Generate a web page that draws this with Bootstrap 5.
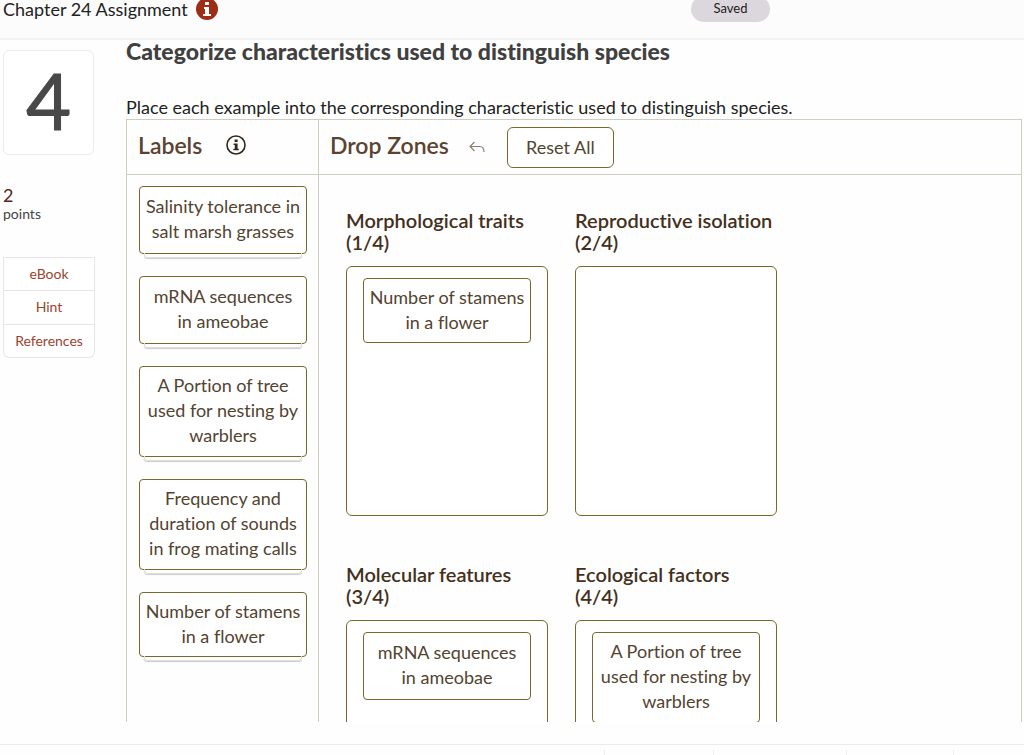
<!DOCTYPE html>
<html lang="en">
<head>
<meta charset="utf-8">
<meta name="viewport" content="width=device-width, initial-scale=1">
<title>Chapter 24 Assignment</title>
<link href="https://cdn.jsdelivr.net/npm/bootstrap@5.3.0/dist/css/bootstrap.min.css" rel="stylesheet">
<style>
  :root { --olive: #79682a; --brown: #53432f; --rule: #cfcdc0; --rust: #9c4330; }
  body { font-family: Lato, "Open Sans", sans-serif; font-variant-ligatures: none; color: #222; background: #fefefe; }
  .topbar { height: 40px; background: #fcfcfc; border-bottom: 2px solid #f3f3f3; }
  .topbar-title { font-size: 18px; line-height: 18px; padding-left: 3px; width: 691px; }
  .saved { margin-top: -4px; height: 26px; width: 79px; border-radius: 13px; background: #dcd7dc; font-size: 13px; line-height: 24px; color: #222; }
  .workspace, .question { min-height: 0; min-width: 0; }
  .side { width: 126px; padding: 10px 0 0 3px; }
  .qnum { width: 91px; height: 105px; border: 1px solid #ebebeb; border-radius: 6px; background: #fff; font-size: 78px; line-height: 98px; color: #484848; -webkit-text-stroke: 1px #484848; }
  .points { margin-top: 31px; font-size: 14px; line-height: 19px; color: #444; }
  .points strong { display: block; font-size: 18px; line-height: 18px; font-weight: 400; color: #5a2418; }
  .side-links { width: 92px; margin-top: 34px; }
  .side-links a { height: 34px; padding: 0; font-size: 14px; line-height: 31px; color: var(--rust); border-color: #e6e6e6; background: #fff; }
  .side-links a:first-child { border-radius: 0; }
  .side-links a:last-child { height: 33px; }
  .qtitle { font-size: 23px; line-height: 22px; font-weight: 900; color: #404040; }
  .qtext { font-size: 18px; line-height: 22px; margin-top: 34px; padding-bottom: 1px; }
  .board { border: 1px solid var(--rule); border-bottom: 0; margin-right: 2px; }
  .col-labels { width: 192px; border-right: 1px solid var(--rule); }
  .board-head { height: 55px; border-bottom: 1px solid var(--rule); padding: 0 0 4px 11px; }
  .board-head h2 { font-size: 23px; line-height: 28px; font-weight: 600; color: #5c4330; }
  .board-head .btn { margin-top: 4px; }
  .board-head .undo { margin-left: 20px; margin-right: 22px; }
  .board-head .reset { height: 41px; width: 107px; border: 1px solid var(--olive); border-radius: 6px; background: #fff; color: var(--brown); font-size: 18px; line-height: 38px; padding: 0; }
  .tiles { padding: 11px 11px 0 12px; gap: 22px; }
  .tile { width: 168px; min-height: 68px; padding: 6px 4px 8px; border: 1px solid var(--olive); border-radius: 4px; background: #fff; color: var(--brown); font-size: 18px; line-height: 25px; text-align: center; display: flex; align-items: center; justify-content: center; position: relative; }
  .tile-short { min-height: 65px; padding: 5px 4px 7px; }
  .stacked::after { content: ""; position: absolute; left: 4px; right: 4px; top: 100%; height: 5px; border: 1px solid #ddd; border-top: 0; border-radius: 0 0 3px 3px; box-shadow: 0 1px 1px #ccc; }
  .zones { padding: 34px 27px 0; display: grid; grid-template-columns: 202px 202px; gap: 47px 27px; }
  .zones h3 { font-size: 20px; line-height: 22px; font-weight: 600; color: #43301c; margin-bottom: 13px; white-space: nowrap; }
  .zone { height: 250px; padding-top: 11px; border: 1px solid var(--olive); border-radius: 6px; background: #fff; }
  .foot { height: 11px; margin-top: 22px; padding-top: 5px; border-top: 1px solid #ececec; display: grid; grid-template-columns: 604fr 109fr 133fr 107fr 71fr; }
  .foot span + span { border-left: 1px solid #ececec; }
</style>
</head>
<body>
<div class="d-flex flex-column vh-100">
  <header class="topbar d-flex align-items-start flex-shrink-0">
    <div class="topbar-title d-flex gap-2">
      <span>Chapter 24 Assignment</span>
      <svg width="22" height="22" viewBox="0 0 22 22" overflow="visible" aria-hidden="true"><circle cx="11" cy="9" r="11" fill="#9e2d17"/><path d="M9 2h4v3H9zM8 7h5v7h2v2H7v-2h2V9H8z" fill="#fff"/></svg>
    </div>
    <div class="saved text-center">Saved</div>
  </header>
  <div class="workspace d-flex flex-grow-1">
    <aside class="side flex-shrink-0">
      <div class="qnum text-center">4</div>
      <div class="points"><strong>2</strong>points</div>
      <nav class="side-links list-group text-center">
        <a href="#" class="list-group-item">eBook</a>
        <a href="#" class="list-group-item">Hint</a>
        <a href="#" class="list-group-item">References</a>
      </nav>
    </aside>
    <main class="question d-flex flex-column flex-grow-1">
      <h1 class="qtitle mb-0">Categorize characteristics used to distinguish species</h1>
      <p class="qtext mb-0">Place each example into the corresponding characteristic used to distinguish species.</p>
      <div class="board d-flex flex-grow-1 overflow-hidden">
        <section class="col-labels flex-shrink-0">
          <div class="board-head d-flex align-items-center">
            <h2 class="mb-0">Labels</h2>
            <svg class="ms-4" width="20" height="20" viewBox="0 0 20 20" aria-hidden="true"><circle cx="10" cy="10" r="9" fill="none" stroke="#33261a" stroke-width="1.6"/><path d="M8.600 4.500h3v2.400h-3zM7.600 8.400h4v5.300h1.200v1.500H7.400v-1.500h1.400V9.900H7.600z" fill="#33261a"/></svg>
          </div>
          <div class="tiles d-flex flex-column">
            <div class="tile stacked">Salinity tolerance in salt marsh grasses</div>
            <div class="tile stacked">mRNA sequences<br>in ameobae</div>
            <div class="tile stacked">A Portion of tree used for nesting by warblers</div>
            <div class="tile stacked">Frequency and duration of sounds in frog mating calls</div>
            <div class="tile tile-short stacked">Number of stamens in a flower</div>
          </div>
        </section>
        <section class="flex-grow-1">
          <div class="board-head d-flex align-items-center">
            <h2 class="mb-0">Drop Zones</h2>
            <button type="button" class="btn undo p-0 border-0 d-flex" aria-label="Undo"><svg width="16" height="12" viewBox="0 0 16 12" fill="none" stroke="#8a8070" stroke-width="1.2"><path d="M5.500 1 1 5.500 5.500 10M1 5.500h9.500q4.500 0 4.500 5.500"/></svg></button>
            <button type="button" class="btn reset">Reset All</button>
          </div>
          <div class="zones">
            <div><h3>Morphological traits<br>(1/4)</h3><div class="zone d-flex justify-content-center align-items-start"><div class="tile tile-short">Number of stamens in a flower</div></div></div>
            <div><h3>Reproductive isolation<br>(2/4)</h3><div class="zone"></div></div>
            <div><h3>Molecular features<br>(3/4)</h3><div class="zone d-flex justify-content-center align-items-start"><div class="tile">mRNA sequences<br>in ameobae</div></div></div>
            <div><h3>Ecological factors<br>(4/4)</h3><div class="zone d-flex justify-content-center align-items-start"><div class="tile">A Portion of tree used for nesting by warblers</div></div></div>
          </div>
        </section>
      </div>
    </main>
  </div>
  <footer class="foot flex-shrink-0"><span></span><span></span><span></span><span></span><span></span></footer>
</div>
<script src="https://cdn.jsdelivr.net/npm/bootstrap@5.3.0/dist/js/bootstrap.bundle.min.js"></script>
</body>
</html>
